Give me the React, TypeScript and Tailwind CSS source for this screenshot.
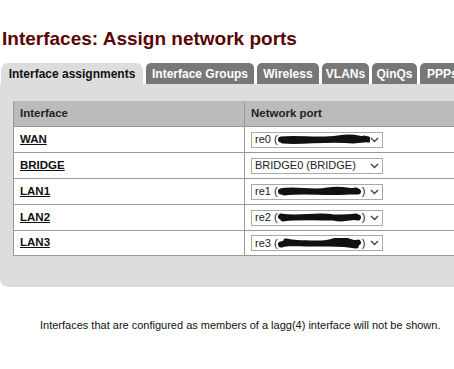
import React from "react";

const tabs = [
  { label: "Interface Groups", w: "w-[108px] justify-center" },
  { label: "Wireless", w: "w-[62px] justify-center" },
  { label: "VLANs", w: "w-[47px] justify-center" },
  { label: "QinQs", w: "w-[45px] justify-center" },
  { label: "PPPs", w: "w-[60px] justify-start pl-[7px]" },
];

const rows = [
  { name: "WAN", port: "re0 (", blot: 0 },
  { name: "BRIDGE", port: "BRIDGE0 (BRIDGE)", blot: -1 },
  { name: "LAN1", port: "re1 (", blot: 1 },
  { name: "LAN2", port: "re2 (", blot: 2 },
  { name: "LAN3", port: "re3 (", blot: 3 },
];

// hand-drawn redaction marks over the hardware names
const blots = [
  "M3 5 C 20 3, 40 7, 60 4 S 80 6, 86 4 L 90 5 M5 6 C 25 8, 50 3, 75 6 L 86 5",
  "M3 5 C 15 2, 35 7, 50 4 S 72 6, 80 5 M6 6 C 30 3, 55 8, 78 4",
  "M3 4 C 20 7, 40 2, 55 5 S 72 3, 80 5 M5 6 C 30 3, 60 7, 78 4",
  "M3 6 C 20 2, 40 8, 55 3 S 72 7, 80 4 M8 3 C 30 8, 55 2, 78 7",
];

function Blot({ i }: { i: number }) {
  const w = i === 0 ? 92 : 84;
  return (
    <svg width={w} height="11" viewBox={`0 0 ${w} 10`} className="shrink-0">
      <path d={blots[i]} stroke="#111" strokeWidth="6" fill="none" strokeLinecap="round" />
    </svg>
  );
}

function Select({ port, blot }: { port: string; blot: number }) {
  return (
    <div className="flex h-[16px] w-[132px] items-center overflow-hidden border border-[#a9a9a9] bg-white pl-[3px] pr-[3px] text-[11px] leading-none text-[#222]">
      <span className="whitespace-nowrap">{port}</span>
      {blot >= 0 && (
        <>
          <Blot i={blot} />
          {blot > 0 && <span>)</span>}
        </>
      )}
      <svg width="9" height="6" viewBox="0 0 9 6" className="ml-auto shrink-0">
        <path d="M1 1 L4.5 4.5 L8 1" stroke="#444" strokeWidth="1.4" fill="none" />
      </svg>
    </div>
  );
}

export default function App() {
  return (
    <div className="h-[369px] w-[454px] overflow-hidden bg-white font-['Liberation_Sans',sans-serif]">
      <h1 className="pl-[2px] pt-[28px] text-[19px] font-bold leading-[22px] text-[#5a0505]">
        Interfaces: Assign network ports
      </h1>

      <div className="mt-[13px] flex h-[21px] items-end gap-[3px] pl-[1px] whitespace-nowrap">
        <div className="flex h-[21px] w-[142px] shrink-0 items-center justify-center rounded-t-[7px] bg-[#dddddd] text-[12px] font-bold text-[#111]">
          Interface assignments
        </div>
        {tabs.map((t) => (
          <div
            key={t.label}
            className={`flex h-[21px] ${t.w} shrink-0 items-center rounded-t-[5px] bg-[#777777] text-[12px] font-bold text-white`}
          >
            {t.label}
          </div>
        ))}
      </div>

      <div className="h-[203px] w-[470px] rounded-bl-[8px] bg-[#dddddd] pl-[13px] pt-[17px]">
        <div className="w-[460px] border-l border-[#999] text-[11.5px]">
          <div className="flex h-[25px] bg-[#bbbbbb] font-bold text-[#222]">
            <div className="flex w-[231px] items-center border-r border-[#999] pl-[6px]">Interface</div>
            <div className="flex items-center pl-[6px]">Network port</div>
          </div>
          {rows.map((r) => (
            <div key={r.name} className="flex h-[26px] border-t border-[#999] bg-white last:border-b">
              <div className="flex w-[231px] items-center border-r border-[#999] pl-[6px] font-bold text-[#111] underline">
                {r.name}
              </div>
              <div className="flex items-center pl-[6px]">
                <Select port={r.port} blot={r.blot} />
              </div>
            </div>
          ))}
        </div>
      </div>

      <p className="pl-[40px] pt-[30px] text-[11px] text-[#111]">
        Interfaces that are configured as members of a lagg(4) interface will not be shown.
      </p>
    </div>
  );
}
